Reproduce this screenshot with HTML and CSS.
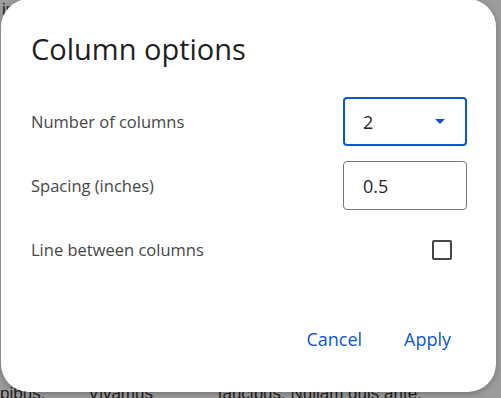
FILE: index.html
```html
<html>
<head>
  <title>Column options</title>
  <link rel="stylesheet" href="styles.css">
</head>
<body>
  <div class="page">
    <div class="page-line">ir</div>
    <div class="page-line bottom">
      <span>pibus.</span>
      <span class="gap1">Vivamus</span>
      <span class="gap2">faucibus. Nullam quis ante.</span>
    </div>
  </div>

  <div class="dialog">
    <h1 class="title">Column options</h1>

    <div class="row">
      <label class="label">Number of columns</label>
      <div class="field select">
        <span>2</span>
        <svg class="arrow" width="10" height="5" viewBox="0 0 10 5"><path d="M0 0 L10 0 L5 5 Z" fill="#0b57d0"/></svg>
      </div>
    </div>

    <div class="row">
      <label class="label">Spacing (inches)</label>
      <div class="field">0.5</div>
    </div>

    <div class="row check-row">
      <label class="label">Line between columns</label>
      <div class="check-wrap"><div class="checkbox"></div></div>
    </div>

    <div class="actions">
      <button class="btn">Cancel</button>
      <button class="btn">Apply</button>
    </div>
  </div>
</body>
</html>
```

FILE: styles.css
```css
body {
  margin: 0;
  background: #9c9c9c;
  font-family: 'Open Sans', sans-serif;
  overflow: hidden;
  height: 398px;
  position: relative;
}
.page {
  height: 398px;
  display: flex;
  flex-direction: column;
  justify-content: space-between;
  color: #1e1e1e;
  font-family: 'Liberation Sans', sans-serif;
  font-size: 17px;
}
.page-line {
  line-height: 20px;
  padding-left: 2px;
}
.page-line.bottom {
  margin-bottom: -6px;
  padding-left: 0;
}
.gap1 {
  margin-left: 38px;
}
.gap2 {
  margin-left: 60px;
}
.dialog {
  position: absolute;
  left: 1px;
  top: -1px;
  width: 495px;
  height: 393px;
  box-sizing: border-box;
  background: #fff;
  border-radius: 28px;
  box-shadow: 0 2px 6px rgba(0, 0, 0, 0.25);
  padding: 34px 29px 0 30px;
}
.title {
  margin: 0 0 32px 0;
  font-size: 29px;
  line-height: 32px;
  font-weight: 400;
  color: #1f1f1f;
}
.row {
  display: flex;
  align-items: center;
  justify-content: space-between;
  height: 49px;
  margin-bottom: 15px;
}
.check-row {
  margin-top: 3px;
}
.label {
  font-size: 16.5px;
  color: #444746;
}
.field {
  width: 124px;
  height: 49px;
  box-sizing: border-box;
  border: 1px solid #747775;
  border-radius: 4px;
  padding-left: 19px;
  display: flex;
  align-items: center;
  font-size: 18px;
  color: #1f1f1f;
}
.select {
  border: 2px solid #0b57d0;
  justify-content: space-between;
  padding-left: 18px;
  padding-right: 20px;
}
.check-wrap {
  width: 48px;
  display: flex;
  justify-content: center;
  margin-right: 1px;
}
.checkbox {
  width: 16px;
  height: 16px;
  border: 2px solid #444746;
  border-radius: 2px;
}
.actions {
  display: flex;
  justify-content: flex-end;
  gap: 10px;
  margin-top: 45px;
}
.btn {
  background: none;
  border: none;
  height: 40px;
  padding: 0 16px;
  font-family: 'Open Sans', sans-serif;
  font-size: 18px;
  font-weight: 500;
  color: #0b57d0;
  cursor: pointer;
}
```
